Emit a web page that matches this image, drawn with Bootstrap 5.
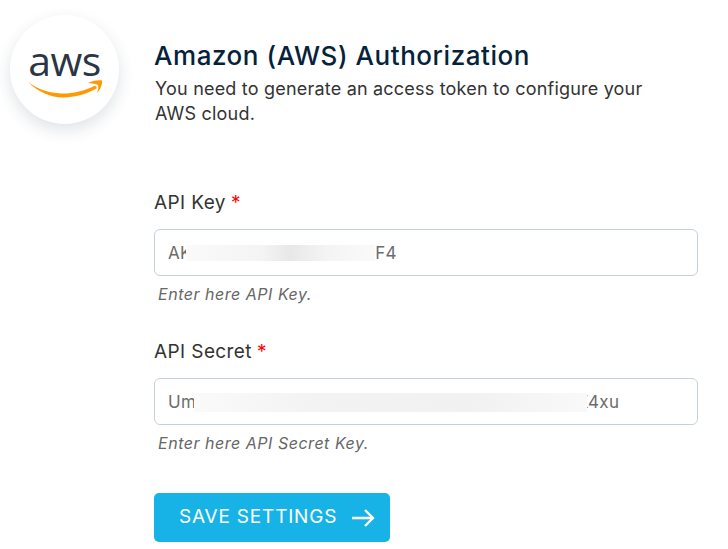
<!DOCTYPE html>
<html lang="en">
<head>
<meta charset="utf-8">
<title>Amazon (AWS) Authorization</title>
<link href="https://cdn.jsdelivr.net/npm/bootstrap@5.3.0/dist/css/bootstrap.min.css" rel="stylesheet">
<style>
html,body{height:549px;overflow:hidden;background:#fff}
body{font-family:"Inter","Open Sans",sans-serif;color:#333}
.shell{padding:15px 30px 0 10px;gap:35px}
.logo-disc{width:109px;height:109px;flex:none;background:#fff;box-shadow:0 6px 16px rgba(30,50,70,.14)}
.logo-word{font-family:"Open Sans",sans-serif;font-size:41px;font-weight:500;line-height:1;color:#2b3544;letter-spacing:-.6px;margin-top:-18px}
.logo-smile{position:absolute;left:17px;top:64px}
.main-col{min-width:0;flex:1;padding-top:26px}
.head-title{font-size:26px;line-height:30px;font-weight:500;color:#04233a;margin:0 0 5px;letter-spacing:.55px}
.head-text{font-size:18px;line-height:25px;color:#333;margin:0 0 65px 1px;width:500px;letter-spacing:.2px}
.field-label{font-size:19px;line-height:24px;color:#333;margin-bottom:14px;gap:5px;letter-spacing:.4px}
.req{color:#f00}
.field-wrap{position:relative}
.field-input.form-control{height:47px;border:1px solid #c5d0de;border-radius:6px;font-family:inherit;font-size:17px;color:#6c6c6c;padding:0 13px;box-shadow:none;letter-spacing:.3px}
.mask{position:absolute;pointer-events:none}
.mask-a{left:32px;width:189px;top:16px;height:16px;background:linear-gradient(90deg,#fafafa,#f4f4f4 40%,#e8e8e8 55%,#f4f4f4 75%,#fafafa)}
.mask-b{left:40px;width:393px;top:15px;height:19px;background:linear-gradient(90deg,#fafafa,#f3f3f3 30%,#f1f1f1 70%,#f9f9f9)}
.field-help{font-size:16px;line-height:20px;font-style:italic;color:#666;margin:8px 0 0 4px;letter-spacing:.52px}
.block-a{margin-bottom:36px}
.block-b{margin-bottom:40px}
.save-btn.btn{width:236px;height:49px;background:#18b3e6;border:0;border-radius:5px;color:#fff;font-size:19px;gap:14px;padding:0 0 0 25px;letter-spacing:.8px}
</style>
</head>
<body>
<div class="d-flex align-items-start shell">
  <div class="logo-disc rounded-circle position-relative d-flex align-items-center justify-content-center">
    <span class="logo-word">aws</span>
    <svg class="logo-smile" width="76" height="20" viewBox="0 0 76 20" aria-hidden="true">
      <path d="M1 3C12 11 24 14.500 36 14.500C46 14.500 58 12 68 6.500L70 9C60 15 48 18.500 36 18.500C24 18.500 11 13 1 3Z" fill="#f90"/>
      <path d="M61 4C66 1.500 72 1 75 1.500C75.500 6 73 11 70 14C71.500 10.500 71.500 7.500 71 6C69 4.500 65 4.500 61 4Z" fill="#f90"/>
    </svg>
  </div>
  <div class="main-col">
    <h1 class="head-title">Amazon (AWS) Authorization</h1>
    <p class="head-text">You need to generate an access token to configure your AWS cloud.</p>
    <div class="block-a">
      <label class="field-label d-flex" for="k"><span>API Key</span><span class="req">*</span></label>
      <div class="field-wrap">
        <input id="k" class="form-control field-input" value="AKIAXXXXXXXXXXXXXXF4" readonly>
        <div class="mask mask-a"></div>
      </div>
      <p class="field-help">Enter here API Key.</p>
    </div>
    <div class="block-b">
      <label class="field-label d-flex" for="s"><span>API Secret</span><span class="req">*</span></label>
      <div class="field-wrap">
        <input id="s" class="form-control field-input" value="UmXXXXXXXXXXXXXXXXXXXXXXXXXXXXXXXXX4xu" readonly>
        <div class="mask mask-b"></div>
      </div>
      <p class="field-help">Enter here API Secret Key.</p>
    </div>
    <button type="button" class="btn save-btn d-flex align-items-center">SAVE SETTINGS
      <svg width="24" height="20" viewBox="0 0 24 20" aria-hidden="true"><path d="M1 10H22M14 2l8 8-8 8" fill="none" stroke="#fff" stroke-width="2.400"/></svg>
    </button>
  </div>
</div>
</body>
</html>
